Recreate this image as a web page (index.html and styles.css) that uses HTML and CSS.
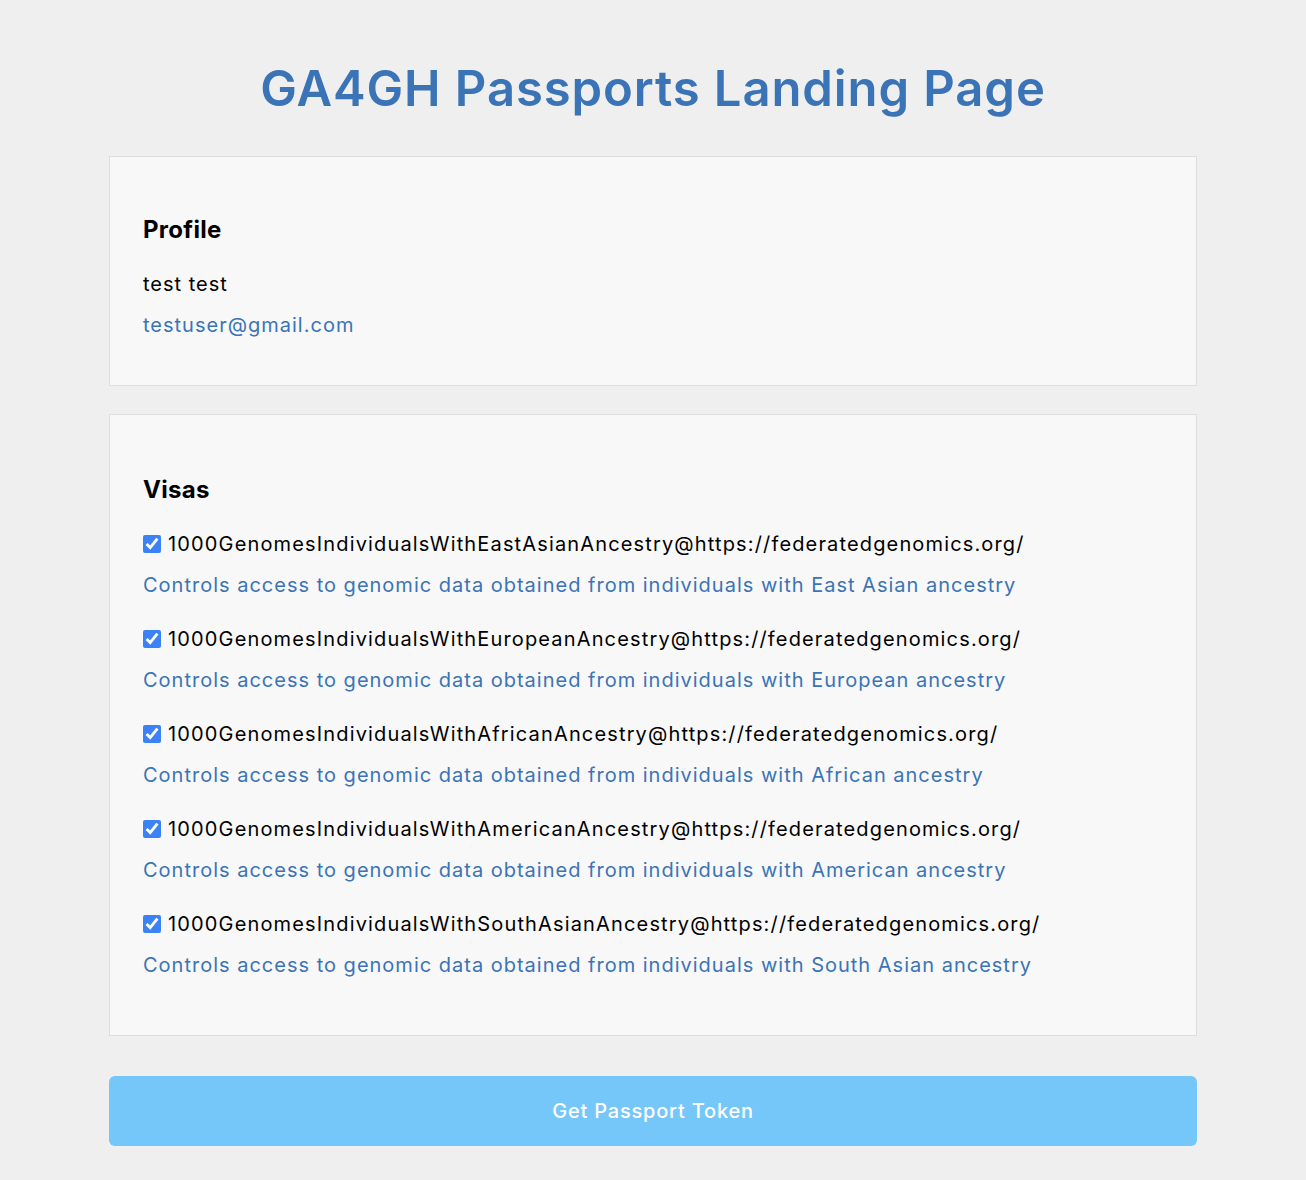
FILE: index.html
```html
<!DOCTYPE html>
<html lang="en">
<head>
<meta charset="utf-8">
<title>GA4GH Passports Landing Page</title>
<link rel="stylesheet" href="styles.css">
</head>
<body>
<main class="page">
  <h1 class="page-title">GA4GH Passports Landing Page</h1>

  <section class="card profile">
    <h2 class="card-title">Profile</h2>
    <p class="profile-name">test test</p>
    <p class="profile-email">testuser@gmail.com</p>
  </section>

  <section class="card visas">
    <h2 class="card-title">Visas</h2>
    <ul class="visa-list">
      <li class="visa">
        <label class="visa-name"><input type="checkbox" checked>1000GenomesIndividualsWithEastAsianAncestry@https://federatedgenomics.org/</label>
        <p class="visa-desc">Controls access to genomic data obtained from individuals with East Asian ancestry</p>
      </li>
      <li class="visa">
        <label class="visa-name"><input type="checkbox" checked>1000GenomesIndividualsWithEuropeanAncestry@https://federatedgenomics.org/</label>
        <p class="visa-desc">Controls access to genomic data obtained from individuals with European ancestry</p>
      </li>
      <li class="visa">
        <label class="visa-name"><input type="checkbox" checked>1000GenomesIndividualsWithAfricanAncestry@https://federatedgenomics.org/</label>
        <p class="visa-desc">Controls access to genomic data obtained from individuals with African ancestry</p>
      </li>
      <li class="visa">
        <label class="visa-name"><input type="checkbox" checked>1000GenomesIndividualsWithAmericanAncestry@https://federatedgenomics.org/</label>
        <p class="visa-desc">Controls access to genomic data obtained from individuals with American ancestry</p>
      </li>
      <li class="visa">
        <label class="visa-name"><input type="checkbox" checked>1000GenomesIndividualsWithSouthAsianAncestry@https://federatedgenomics.org/</label>
        <p class="visa-desc">Controls access to genomic data obtained from individuals with South Asian ancestry</p>
      </li>
    </ul>
  </section>

  <button class="token-button" type="button">Get Passport Token</button>
</main>
</body>
</html>
```

FILE: styles.css
```css
html, body {
  margin: 0;
  padding: 0;
}

body {
  background: #efefef;
  font-family: Inter, "Noto Sans", "Liberation Sans", sans-serif;
  color: #000;
}

.page {
  max-width: 1088px;
  margin: 0 auto;
  padding: 59px 0 34px;
  display: flex;
  flex-direction: column;
}

.page-title {
  margin: 0 0 37px;
  text-align: center;
  font-size: 49px;
  line-height: 60px;
  font-weight: 600;
  letter-spacing: 0.9px;
  color: #3a74b6;
}

.card {
  background: #f8f8f8;
  border: 1px solid #dedede;
  padding: 58px 33px 48px;
  margin-bottom: 28px;
}

.card-title {
  margin: 0 0 27px;
  font-size: 24px;
  line-height: 30px;
  font-weight: 700;
  letter-spacing: 0.3px;
}

.profile-name,
.profile-email {
  margin: 0;
  font-size: 20px;
  line-height: 24px;
  letter-spacing: 1px;
}

.profile-name {
  margin-bottom: 17px;
}

.profile-email {
  color: #3a74b6;
}

.visas {
  padding-top: 60px;
  padding-bottom: 28px;
  margin-bottom: 40px;
}

.visa-list {
  list-style: none;
  margin: 0;
  padding: 0;
}

.visa {
  margin-bottom: 30px;
}

.visa-name {
  display: flex;
  align-items: center;
  font-size: 20px;
  line-height: 24px;
  letter-spacing: 1.15px;
}

.visa-name input {
  flex: none;
  width: 18px;
  height: 18px;
  margin: 0 7px 0 0;
  accent-color: #3b82f6;
}

.visa-desc {
  margin: 17px 0 0;
  font-size: 20px;
  line-height: 24px;
  letter-spacing: 1px;
  color: #3a74b6;
}

.token-button {
  height: 70px;
  border: 0;
  border-radius: 6px;
  background: #75c6f9;
  color: #fff;
  font-family: inherit;
  font-size: 20px;
  font-weight: 500;
  letter-spacing: 0.8px;
}
```
